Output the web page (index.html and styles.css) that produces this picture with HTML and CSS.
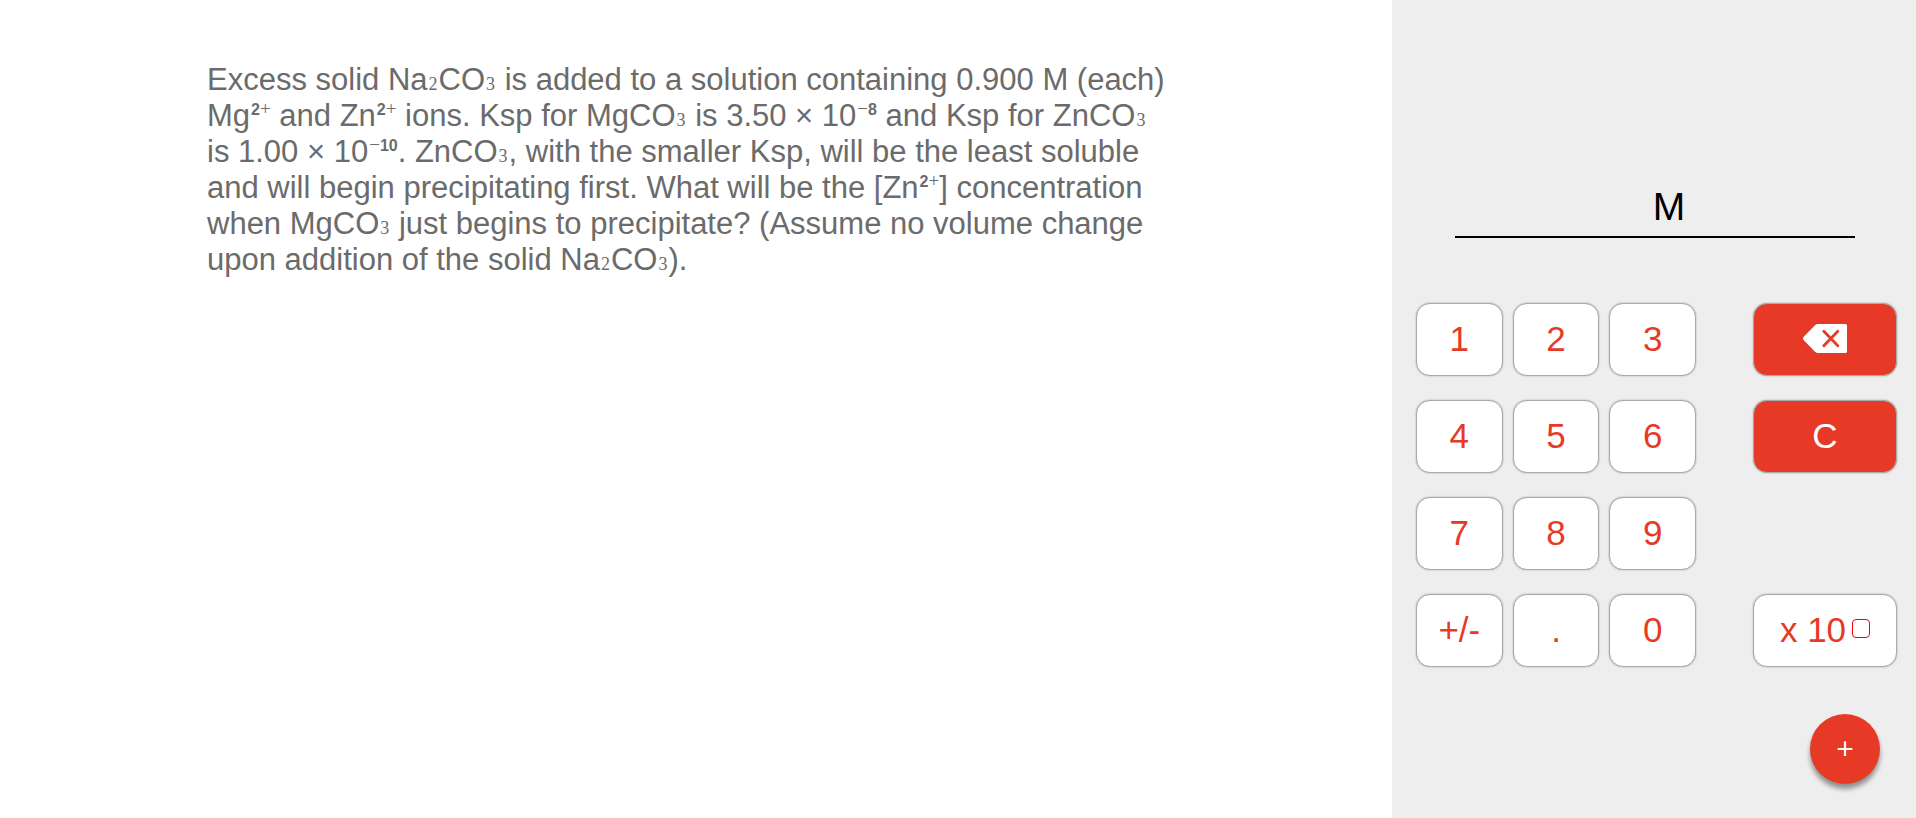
FILE: index.html
```html
<!DOCTYPE html>
<html lang="en">
<head>
    <meta charset="UTF-8">
    <meta name="viewport" content="width=device-width, initial-scale=1.0">
    <title>Selective Precipitation</title>
    <link rel="stylesheet" href="styles.css">
</head>

<body>
<main class="question">
    <p class="question-text">Excess solid Na<sub>2</sub>CO<sub>3</sub> is added to a solution containing 0.900 M (each) Mg<sup>2<span class="sign">+</span></sup> and Zn<sup>2<span class="sign">+</span></sup> ions. Ksp for MgCO<sub>3</sub> is 3.50 × 10<sup><span class="sign">−</span>8</sup> and Ksp for ZnCO<sub>3</sub> is 1.00 × 10<sup><span class="sign">−</span>10</sup>. ZnCO<sub>3</sub>, with the smaller Ksp, will be the least soluble and will begin precipitating first. What will be the [Zn<sup>2<span class="sign">+</span></sup>] concentration when MgCO<sub>3</sub> just begins to precipitate? (Assume no volume change upon addition of the solid Na<sub>2</sub>CO<sub>3</sub>).</p>
</main>

<aside class="panel">
    <div class="answer">
        <input type="text" id="answer" class="answer-value" aria-label="Answer" readonly>
        <label for="answer">M</label>
    </div>

    <div class="keypad">
        <div class="digits">
            <button class="key">1</button>
            <button class="key">2</button>
            <button class="key">3</button>
            <button class="key">4</button>
            <button class="key">5</button>
            <button class="key">6</button>
            <button class="key">7</button>
            <button class="key">8</button>
            <button class="key">9</button>
            <button class="key">+/-</button>
            <button class="key">.</button>
            <button class="key">0</button>
        </div>
        <div class="actions">
            <button class="key key-red" aria-label="Backspace">
                <svg width="44" height="29" viewBox="0 0 44 29">
                    <path fill="#fff" d="M15 0H42.500Q44 0 44 1.500V27.500Q44 29 42.500 29H15Q13.500 29 12 27.700L.8 16.200Q-.8 14.500 .8 12.800L12 1.300Q13.500 0 15 0Z"/>
                    <path stroke="#e63a27" stroke-width="2.800" stroke-linecap="round" d="M20.800 7.300L34.800 21.700M34.800 7.300L20.800 21.700"/>
                </svg>
            </button>
            <button class="key key-red">C</button>
            <button class="key key-exp">x 10<span class="exponent"></span></button>
        </div>
    </div>
</aside>

<button class="add">+</button>
</body>
</html>
```
FILE: styles.css
```css
* {
    box-sizing: border-box;
}

body {
    font-family: Arial, "Liberation Sans", sans-serif;
    margin: 0;
    min-height: 100vh;
    display: flex;
    background-color: #fff;
}

.question {
    flex: 1;
    padding: 62px 0 0 207px;
}

.question-text {
    margin: 0;
    max-width: 968px;
    font-size: 31px;
    line-height: 36px;
    color: #6b6b6b;
}

/* subscripts sit on the baseline */
sub {
    padding: 0 1px;
    font-family: "Liberation Serif", serif;
    font-size: 18px;
    line-height: 0;
    vertical-align: baseline;
}

sup {
    padding-left: 1px;
    font-size: 16px;
    font-weight: bold;
    line-height: 0;
    vertical-align: 11px;
}

.sign {
    font-family: "Liberation Serif", serif;
    font-size: 19px;
    font-weight: normal;
}

.panel {
    flex: 0 0 524px;
    padding: 176px 19px 0 24px;
    background-color: #eee;
}

.answer {
    display: flex;
    justify-content: center;
    align-items: center;
    width: 400px;
    height: 62px;
    padding-top: 2px;
    margin: 0 39px 65px;
    border-bottom: 2px solid #000;
    font-size: 39px;
    color: #000;
}

.answer-value {
    width: 28px;
    padding: 0;
    border: none;
    outline: none;
    background: none;
    font: inherit;
}

.keypad {
    display: flex;
    justify-content: space-between;
}

.digits {
    display: grid;
    grid-template-columns: repeat(3, 1fr);
    grid-auto-rows: 73px;
    gap: 24px 10px;
    width: 280px;
}

.actions {
    display: grid;
    grid-template-rows: repeat(4, 73px);
    row-gap: 24px;
    width: 144px;
}

.key {
    display: flex;
    justify-content: center;
    align-items: center;
    padding: 0 0 2px;
    border: 1px solid #a9a9a9;
    border-radius: 14px;
    background-color: #fff;
    box-shadow: 0 0 2px rgba(0, 0, 0, 0.3);
    font-family: inherit;
    font-size: 35px;
    color: #e63a27;
    cursor: pointer;
}

.key-red {
    background-color: #e63a27;
    color: #fff;
}

.key-exp {
    grid-row: 4;
}

.exponent {
    width: 18px;
    height: 19px;
    margin: 0 0 3px 6px;
    border: 1px solid #f00;
    border-radius: 4px;
}

.add {
    position: fixed;
    right: 36px;
    bottom: 34px;
    width: 70px;
    height: 70px;
    padding: 0;
    border: none;
    border-radius: 50%;
    background-color: #e63a27;
    box-shadow: 0 5px 5px rgba(0, 0, 0, 0.4);
    font-family: inherit;
    font-size: 30px;
    color: #fff;
    cursor: pointer;
}
```
